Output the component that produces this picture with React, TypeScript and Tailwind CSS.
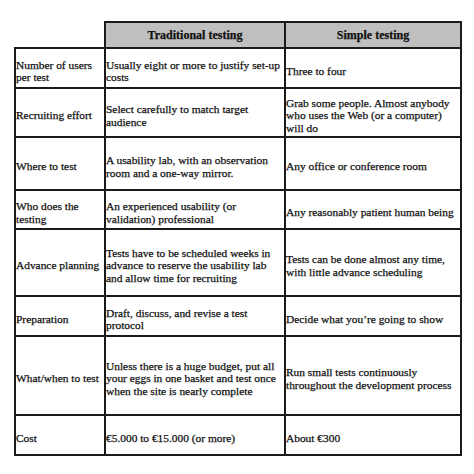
import React from "react";

const rows: { h: string; a: string[]; b: string[]; c: string[] }[] = [
  { h: "h-[40px]", a: ["Number of users", "per test"], b: ["Usually eight or more to justify set-up", "costs"], c: ["Three to four"] },
  { h: "h-[49px]", a: ["Recruiting effort"], b: ["Select carefully to match target", "audience"], c: ["Grab some people. Almost anybody", "who uses the Web (or a computer)", "will do"] },
  { h: "h-[53px]", a: ["Where to test"], b: ["A usability lab, with an observation", "room and a one-way mirror."], c: ["Any office or conference room"] },
  { h: "h-[39px]", a: ["Who does the", "testing"], b: ["An experienced usability (or", "validation) professional"], c: ["Any reasonably patient human being"] },
  { h: "h-[67px]", a: ["Advance planning"], b: ["Tests have to be scheduled weeks in", "advance to reserve the usability lab", "and allow time for recruiting"], c: ["Tests can be done almost any time,", "with little advance scheduling"] },
  { h: "h-[40px]", a: ["Preparation"], b: ["Draft, discuss, and revise a test", "protocol"], c: ["Decide what you’re going to show"] },
  { h: "h-[79px]", a: ["What/when to test"], b: ["Unless there is a huge budget, put all", "your eggs in one basket and test once", "when the site is nearly complete"], c: ["Run small tests continuously", "throughout the development process"] },
  { h: "h-[40px]", a: ["Cost"], b: ["€5.000 to €15.000 (or more)"], c: ["About €300"] },
];

function Lines({ lines }: { lines: string[] }) {
  return (
    <div className="whitespace-nowrap">
      {lines.map((l, i) => (
        <div key={i}>{l}</div>
      ))}
    </div>
  );
}

export default function App() {
  return (
    <div
      className="w-[474px] h-[474px] bg-white text-[#111111] text-[11.4px] leading-[12.5px] pt-[21px] pl-[14px] [-webkit-text-stroke:0.25px_#111111]"
      style={{ fontFamily: '"Liberation Serif", "Times New Roman", serif' }}
    >
      <div className="grid grid-cols-[92px_180px_176px] w-[448px]">
        <div className="h-[28px] border-r-2 border-b-2 border-[#1a1a1a]" />
        <div className="h-[28px] border-t-2 border-r-2 border-b-2 border-[#1a1a1a] bg-[#bfbfbf] flex items-center justify-center font-bold text-[12px]">
          Traditional testing
        </div>
        <div className="h-[28px] border-t-2 border-r-2 border-b-2 border-[#1a1a1a] bg-[#bfbfbf] flex items-center justify-center font-bold text-[12px]">
          Simple testing
        </div>
        {rows.map((r, i) => (
          <React.Fragment key={i}>
            <div className={`${r.h} border-l-2 border-r-2 border-b-2 border-[#1a1a1a] flex items-center pt-[6px]`}>
              <Lines lines={r.a} />
            </div>
            <div className={`${r.h} border-r-2 border-b-2 border-[#1a1a1a] flex items-center pt-[6px]`}>
              <Lines lines={r.b} />
            </div>
            <div className={`${r.h} border-r-2 border-b-2 border-[#1a1a1a] flex items-center pt-[6px]`}>
              <Lines lines={r.c} />
            </div>
          </React.Fragment>
        ))}
      </div>
    </div>
  );
}
